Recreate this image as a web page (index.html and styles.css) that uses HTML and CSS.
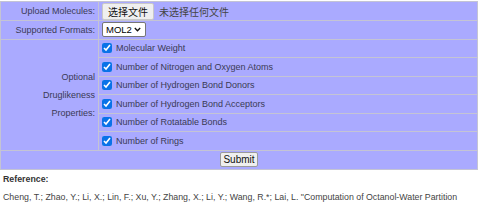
FILE: index.html
```html
<!DOCTYPE html>
<html>
<head>
<meta charset="utf-8">
<link rel="stylesheet" href="styles.css">
</head>
<body>
<table class="form">
  <tr class="r-upload">
    <td class="label">Upload Molecules:</td>
    <td class="field"><span class="filepick"><button type="button" class="filebtn">选择文件</button><span class="filename">未选择任何文件</span></span></td>
  </tr>
  <tr class="r-row">
    <td class="label">Supported Formats:</td>
    <td class="field"><span class="selwrap"><select class="fmt"><option>MOL2</option></select><svg class="chev" width="7" height="5" viewBox="0 0 7 5"><path d="M0.8 1 L3.5 3.8 L6.2 1" fill="none" stroke="#111" stroke-width="1.3"/></svg></span></td>
  </tr>
  <tr class="r-row">
    <td class="label multi" rowspan="6">Optional<br>Druglikeness<br>Properties:</td>
    <td class="field"><label class="opt"><input type="checkbox" checked>Molecular Weight</label></td>
  </tr>
  <tr class="r-row"><td class="field"><label class="opt"><input type="checkbox" checked>Number of Nitrogen and Oxygen Atoms</label></td></tr>
  <tr class="r-row"><td class="field"><label class="opt"><input type="checkbox" checked>Number of Hydrogen Bond Donors</label></td></tr>
  <tr class="r-row"><td class="field"><label class="opt"><input type="checkbox" checked>Number of Hydrogen Bond Acceptors</label></td></tr>
  <tr class="r-row"><td class="field"><label class="opt"><input type="checkbox" checked>Number of Rotatable Bonds</label></td></tr>
  <tr class="r-row"><td class="field"><label class="opt"><input type="checkbox" checked>Number of Rings</label></td></tr>
  <tr class="r-submit">
    <td class="submitcell" colspan="2"><input type="submit" class="submit" value="Submit"></td>
  </tr>
</table>
<div class="ref">
  <div class="ref-title">Reference:</div>
  <div class="ref-text">Cheng, T.; Zhao, Y.; Li, X.; Lin, F.; Xu, Y.; Zhang, X.; Li, Y.; Wang, R.*; Lai, L. "Computation of Octanol-Water Partition Coefficients by Guiding an Additive Model with Knowledge" J. Chem. Inf. Model. 2007, 47, 2140-2148.</div>
</div>
</body>
</html>
```

FILE: styles.css
```css
html, body {
  margin: 0;
  padding: 0;
  background: #ffffff;
}
body {
  font-family: "Liberation Sans", Arial, sans-serif;
  font-size: 9px;
  color: #333;
  padding-top: 1px;
}
.form {
  width: 478px;
  border-collapse: collapse;
  background: #aaaaff;
  border: 1px solid #9a9aa8;
}
.form td {
  border: 1px solid #c4c4d4;
  padding: 0;
}
.label {
  width: 94px;
  text-align: right;
  padding-right: 3px !important;
  color: #3a3a55;
  white-space: nowrap;
}
.label.multi {
  line-height: 18px;
}
.r-upload td { height: 18px; }
.r-row td.field { height: 17.5px; }
.r-row td.label:not(.multi) { height: 17.5px; }
.field {
  padding-left: 3px !important;
}
.filepick {
  display: flex;
  align-items: center;
  gap: 5px;
}
.filebtn {
  font-family: "Liberation Sans", "Noto Sans CJK SC", sans-serif;
  font-size: 10px;
  height: 17px;
  padding: 0 5px;
  margin: 0;
  background: #efefef;
  border: 1px solid #c9c9c9;
  border-radius: 2px;
  color: #111;
}
.filename {
  font-family: "Noto Sans CJK SC", sans-serif;
  font-size: 10px;
  color: #444;
}
.selwrap {
  position: relative;
  display: inline-block;
  vertical-align: middle;
  height: 15px;
}
.fmt {
  -webkit-appearance: none;
  appearance: none;
  font-family: "Liberation Sans", Arial, sans-serif;
  font-size: 9.5px;
  height: 15px;
  width: 44px;
  padding: 0 0 0 3px;
  margin: 0;
  color: #000;
  background: #fff;
  border: 1px solid #767676;
  border-radius: 2px;
  display: block;
}
.chev {
  position: absolute;
  right: 5px;
  top: 5px;
  pointer-events: none;
}
.opt {
  display: flex;
  align-items: center;
  color: #3a3a55;
}
.opt input {
  width: 10px;
  height: 10px;
  margin: 0 4px 0 0;
  accent-color: #0a72e8;
}
.submitcell {
  text-align: center;
  height: 18px;
}
.submit {
  font-family: "Liberation Sans", Arial, sans-serif;
  font-size: 10px;
  height: 15px;
  padding: 0 2px;
  margin: 0;
  background: #efefef;
  border: 1px solid #9a9a9a;
  border-radius: 2px;
  color: #111;
}
.ref {
  padding: 0 3px;
  font-size: 8.8px;
  color: #444;
}
.ref-title {
  line-height: 18px;
  font-weight: bold;
  color: #333;
}
.ref-text {
  margin-top: 1px;
  line-height: 16px;
}
```
